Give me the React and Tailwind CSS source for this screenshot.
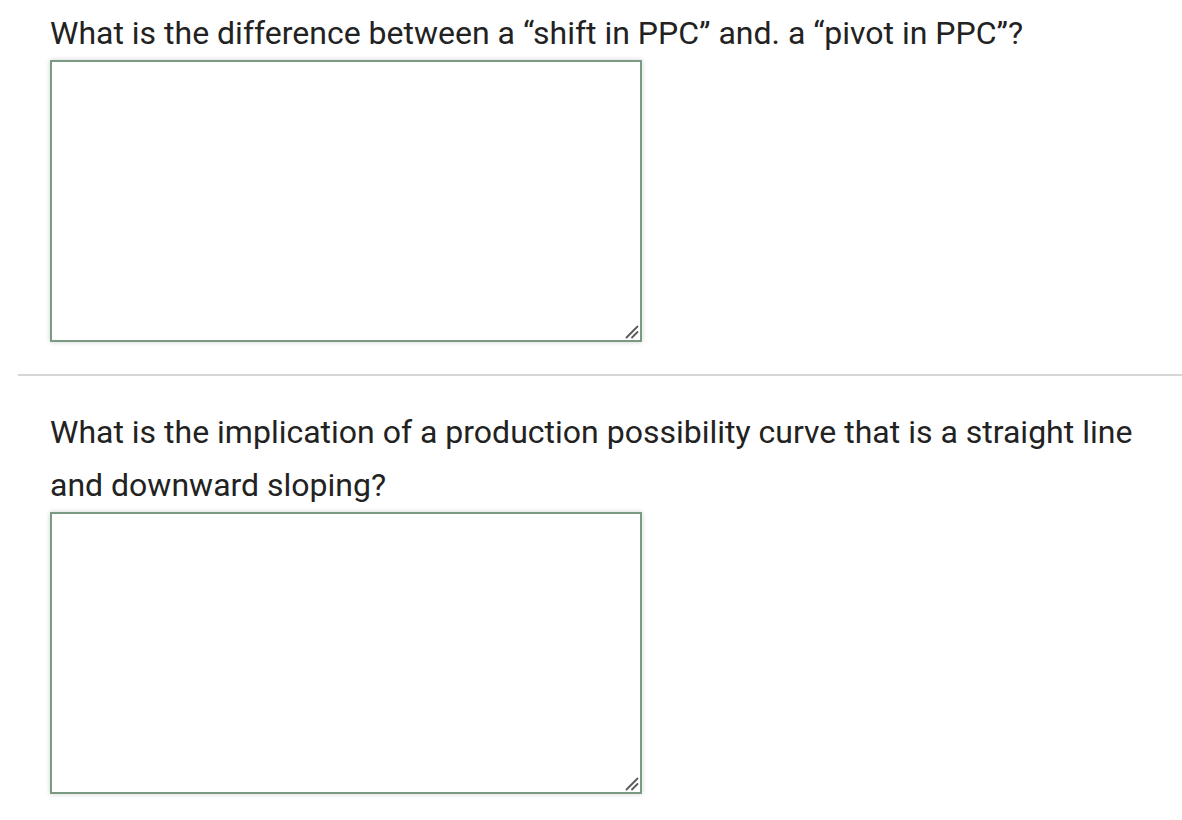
const questions = [
  "What is the difference between a \u201cshift in PPC\u201d and. a \u201cpivot in PPC\u201d?",
  "What is the implication of a production possibility curve that is a straight line and downward sloping?",
];

function Question({ text }) {
  return (
    <div className="pl-[50px] pr-[40px]">
      <p className="text-[32px] leading-[53px] text-[#222222]">{text}</p>
      <div className="relative w-[592px] h-[282px]">
        <textarea
          className="block w-full h-full resize-none border-2 border-[#7a9a83] bg-white shadow-[0_0_5px_rgba(0,0,0,0.18)] outline-none"
          aria-label={text}
        />
        {/* resize grip */}
        <svg
          className="pointer-events-none absolute right-[3px] bottom-[3px]"
          width="14"
          height="14"
          viewBox="0 0 14 14"
        >
          <path d="M1.5 12.5 L12.5 1.5 M7 12.5 L12.5 7" stroke="#5a5a5a" strokeWidth="1.8" strokeLinecap="round" />
        </svg>
      </div>
    </div>
  );
}

export default function App() {
  return (
    <div className="min-h-screen bg-white pt-[7px]" style={{ fontFamily: "Roboto, 'Liberation Sans', sans-serif" }}>
      <Question text={questions[0]} />
      <div className="ml-[18px] mt-[32px] mb-[30px] h-[2px] bg-[#d6d6d6]" />
      <Question text={questions[1]} />
    </div>
  );
}
